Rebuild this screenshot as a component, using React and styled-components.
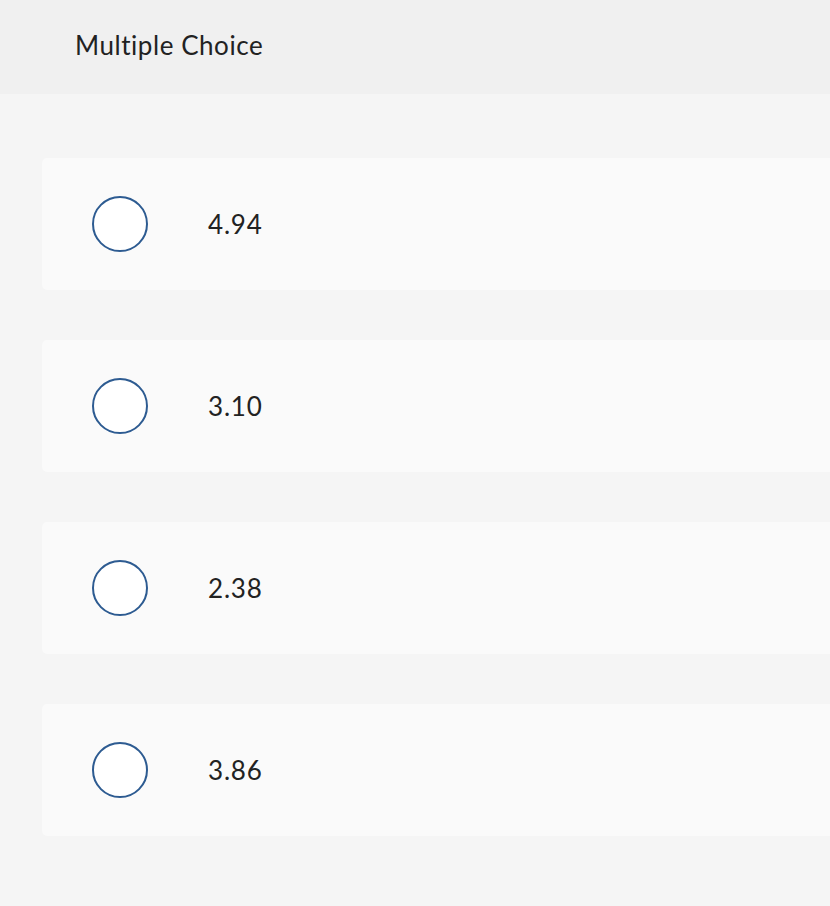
import styled, { createGlobalStyle } from "styled-components"

const GlobalStyle = createGlobalStyle`
    html, body {
        margin: 0;
        padding: 0;
        background: #f5f5f5;
        overflow: hidden;
    }
    body {
        font-family: Lato, "Open Sans", sans-serif;
        color: #222;
    }
`

const choices = ["4.94", "3.10", "2.38", "3.86"]

const Page = styled.div`
    width: 830px;
    min-height: 906px;
    background: #f5f5f5;
`

const Header = styled.header`
    height: 94px;
    background: #f0f0f0;
    display: flex;
    align-items: center;
    padding: 0 0 4px 75px;
    box-sizing: border-box;
`

const Title = styled.h1`
    margin: 0;
    font-size: 26px;
    font-weight: 400;
    color: #222;
    letter-spacing: 0.55px;
`

const List = styled.ul`
    list-style: none;
    margin: 0;
    padding: 64px 0 0 42px;
    display: flex;
    flex-direction: column;
    gap: 50px;
`

const Option = styled.li`
    width: 820px;
    height: 132px;
    background: #fafafa;
    border-radius: 5px 0 0 5px;
    display: flex;
    align-items: center;
    padding-left: 50px;
    box-sizing: border-box;
    cursor: pointer;
`

const Radio = styled.span`
    width: 56px;
    height: 56px;
    border-radius: 50%;
    border: 2px solid #2d5b91;
    background: #fff;
    box-sizing: border-box;
    flex-shrink: 0;
`

const Label = styled.span`
    margin-left: 60px;
    font-size: 26px;
    color: #222;
    letter-spacing: 0.8px;
`

const App = () => {
    return (
        <Page>
            <GlobalStyle />
            <Header>
                <Title>Multiple Choice</Title>
            </Header>
            <List>
                {choices.map((choice, index) => (
                    <Option key={index}>
                        <Radio />
                        <Label>{choice}</Label>
                    </Option>
                ))}
            </List>
        </Page>
    )
}

export default App
